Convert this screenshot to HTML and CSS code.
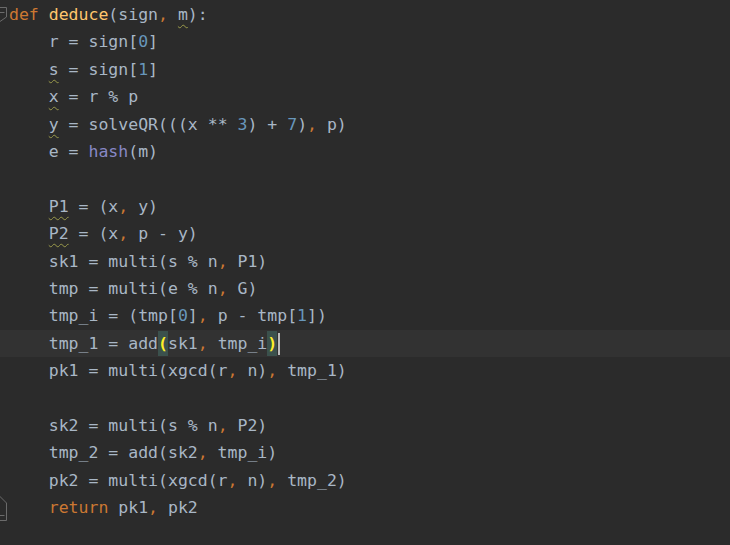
FILE: index.html
```html
<!DOCTYPE html>
<html>
<head>
<meta charset="utf-8">
<link rel="stylesheet" href="styles.css">
</head>
<body>
<div class="editor">
  <div class="line"><span class="gutter"><svg class="fold" width="8" height="16" viewBox="0 0 8 16"><path d="M-6 0.5 H6.5 V10 L0 14.5 L-6 10 Z" fill="none" stroke="#6b6b6b"/><path d="M0 5.5 H4.5" stroke="#6b6b6b"/></svg></span><span class="code"><span class="kw">def</span> <span class="fn">deduce</span>(sign<span class="kw">,</span> <span class="warn">m</span>):</span></div>
  <div class="line"><span class="gutter"></span><span class="code">    r = sign[<span class="num">0</span>]</span></div>
  <div class="line"><span class="gutter"></span><span class="code">    <span class="warn">s</span> = sign[<span class="num">1</span>]</span></div>
  <div class="line"><span class="gutter"></span><span class="code">    <span class="warn">x</span> = r % p</span></div>
  <div class="line"><span class="gutter"></span><span class="code">    <span class="warn">y</span> = solveQR(((x ** <span class="num">3</span>) + <span class="num">7</span>)<span class="kw">,</span> p)</span></div>
  <div class="line"><span class="gutter"></span><span class="code">    e = <span class="bi">hash</span>(m)</span></div>
  <div class="line"><span class="gutter"></span><span class="code"> </span></div>
  <div class="line"><span class="gutter"></span><span class="code">    <span class="warn">P1</span> = (x<span class="kw">,</span> y)</span></div>
  <div class="line"><span class="gutter"></span><span class="code">    <span class="warn">P2</span> = (x<span class="kw">,</span> p - y)</span></div>
  <div class="line"><span class="gutter"></span><span class="code">    sk1 = multi(s % n<span class="kw">,</span> P1)</span></div>
  <div class="line"><span class="gutter"></span><span class="code">    tmp = multi(e % n<span class="kw">,</span> G)</span></div>
  <div class="line"><span class="gutter"></span><span class="code">    tmp_i = (tmp[<span class="num">0</span>]<span class="kw">,</span> p - tmp[<span class="num">1</span>])</span></div>
  <div class="line current"><span class="gutter"></span><span class="code">    tmp_1 = add<span class="brace">(</span>sk1<span class="kw">,</span> tmp_i<span class="brace">)</span><span class="caret"></span></span></div>
  <div class="line"><span class="gutter"></span><span class="code">    pk1 = multi(xgcd(r<span class="kw">,</span> n)<span class="kw">,</span> tmp_1)</span></div>
  <div class="line"><span class="gutter"></span><span class="code"> </span></div>
  <div class="line"><span class="gutter"></span><span class="code">    sk2 = multi(s % n<span class="kw">,</span> P2)</span></div>
  <div class="line"><span class="gutter"></span><span class="code">    tmp_2 = add(sk2<span class="kw">,</span> tmp_i)</span></div>
  <div class="line"><span class="gutter"></span><span class="code">    pk2 = multi(xgcd(r<span class="kw">,</span> n)<span class="kw">,</span> tmp_2)</span></div>
  <div class="line"><span class="gutter"><svg class="fold" width="8" height="26" viewBox="0 0 8 26"><path d="M0 1.5 L6.5 8 V25.5 H-6 V8 Z" fill="none" stroke="#6b6b6b"/><path d="M0 20.5 H4.5" stroke="#6b6b6b"/></svg></span><span class="code">    <span class="kw">return</span> pk1<span class="kw">,</span> pk2</span></div>
</div>
</body>
</html>
```
FILE: styles.css
```css
html, body {
  margin: 0;
  padding: 0;
  background: #2b2b2b;
}
.editor {
  width: 730px;
  height: 545px;
  overflow: hidden;
  padding-top: 1px;
  box-sizing: border-box;
  font-family: "DejaVu Sans Mono", "Liberation Mono", monospace;
  font-size: 16.5px;
  color: #a9b7c6;
}
.line {
  display: flex;
  height: 27.4px;
  line-height: 27.4px;
  white-space: pre;
}
.line.current {
  background: #323232;
}
.gutter {
  width: 9px;
  flex: none;
  display: flex;
  align-items: center;
  overflow: visible;
}
.fold {
  display: block;
  flex: none;
}
.code {
  flex: 1;
}
.kw { color: #cc7832; }
.fn { color: #ffc66d; }
.num { color: #6897bb; }
.bi { color: #8888c6; }
.warn {
  text-decoration: underline wavy #9a9a4a;
  text-decoration-thickness: 1px;
  text-underline-offset: 4px;
}
.brace {
  display: inline-block;
  background: #3b514d;
  color: #ffef28;
  font-weight: bold;
  height: 25px;
  line-height: 25px;
  vertical-align: top;
  margin-top: 1px;
}
.caret {
  display: inline-block;
  width: 2px;
  height: 22px;
  background: #bbbbbb;
  vertical-align: middle;
  margin-left: 1px;
}
```
